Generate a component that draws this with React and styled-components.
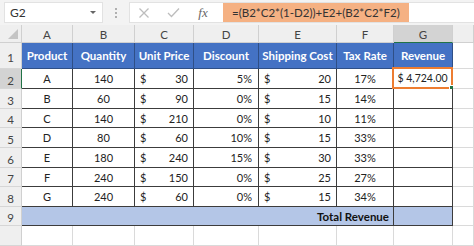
import React from "react";
import styled, { createGlobalStyle } from "styled-components";

const Global = createGlobalStyle`
  html, body { margin: 0; padding: 0; background: #ffffff; }
  body { font-family: Lato, "Liberation Sans", sans-serif; overflow: hidden; }
`;

const Page = styled.div`
  width: 474px;
  height: 246px;
  display: flex;
  flex-direction: column;
  overflow: hidden;
`;

const Toolbar = styled.div`
  height: 29px;
  background: #f3f3f3;
  display: flex;
  align-items: center;
  padding: 0 0 0 4px;
  box-sizing: border-box;
`;

const NameBox = styled.div`
  width: 99px;
  height: 21px;
  background: #fff;
  border: 1px solid #e2e2e2;
  box-sizing: border-box;
  display: flex;
  align-items: center;
  justify-content: space-between;
  padding: 0 6px 0 5px;
  font-size: 12px;
  color: #333;
`;

const Caret = styled.span`
  width: 0;
  height: 0;
  border-left: 3px solid transparent;
  border-right: 3px solid transparent;
  border-top: 3px solid #666;
`;

const Dots = styled.div`
  width: 26px;
  display: flex;
  flex-direction: column;
  align-items: center;
  gap: 2px;
  & > span { width: 2px; height: 2px; background: #9a9a9a; border-radius: 1px; }
`;

const FormulaBox = styled.div`
  flex: 1;
  height: 21px;
  background: #fff;
  border: 1px solid #e2e2e2;
  border-right: none;
  box-sizing: border-box;
  display: flex;
  align-items: center;
`;

const IconSlot = styled.div`
  width: ${p => p.$w}px;
  display: flex;
  align-items: center;
  justify-content: center;
  color: #b8b8b8;
`;

const Fx = styled.span`
  font-family: "Liberation Serif", serif;
  font-style: italic;
  font-size: 13px;
  color: #666;
`;

const Formula = styled.div`
  height: 19px;
  background: #f5b183;
  display: flex;
  align-items: center;
  padding: 0 9px 0 9px;
  font-family: Lato, "Liberation Sans", sans-serif;
  font-size: 11.5px;
  color: #333;
  margin-left: 5px;
  white-space: nowrap;
`;

const Grid = styled.div`
  display: grid;
  grid-template-columns: 22px 51px 62px 59px 65px 78px 57px 59px 1fr;
  grid-template-rows: 18px 26px 20px 20px 19px 20px 20px 19px 20px 19px 20px;
  flex: 1;
`;

const Cell = styled.div`
  box-sizing: border-box;
  position: relative;
  display: flex;
  align-items: center;
  justify-content: ${p => p.$align || "center"};
  padding: 0 ${p => p.$pad ?? 0}px;
  font-size: 11px;
  color: #222;
  white-space: nowrap;
  border-right: 1px solid ${p => (p.$dark ? "#3c3c3c" : "#dadada")};
  border-bottom: 1px solid ${p => (p.$dark ? "#3c3c3c" : "#dadada")};
  background: ${p => p.$bg || "#fff"};
  grid-column: ${p => p.$span ? `span ${p.$span}` : "auto"};
`;

const ColHead = styled(Cell)`
  background: ${p => (p.$sel ? "#d3d3d3" : "#efefef")};
  border-right: 1px solid #d0d0d0;
  border-bottom: 1px solid ${p => (p.$sel ? "#217346" : "#d0d0d0")};
  color: #444;
  font-size: 11.5px;
  padding-top: 1px;
`;

const RowHead = styled(Cell)`
  background: ${p => (p.$sel ? "#d3d3d3" : "#efefef")};
  border-right: 1px solid ${p => (p.$sel ? "#217346" : "#d0d0d0")};
  border-bottom: 1px solid #d6d6d6;
  color: #444;
  font-size: 11.5px;
  padding-top: 3px;
`;

const Corner = styled(ColHead)`
  &::after {
    content: "";
    position: absolute;
    right: 3px;
    bottom: 3px;
    width: 0;
    height: 0;
    border-left: 10px solid transparent;
    border-bottom: 10px solid #c4c4c4;
  }
`;

const Head = styled(Cell)`
  background: #4472c4;
  color: #fff;
  font-weight: 700;
  font-size: 11.5px;
  border-right: 1px solid #2f4f86;
  border-bottom: 1px solid #2f4f86;
`;

const Money = styled(Cell)`
  justify-content: space-between;
  padding: 0 5px 0 5px;
`;

const Selected = styled.div`
  position: absolute;
  left: -2px;
  top: -2px;
  right: -1px;
  bottom: -1px;
  border: 2px solid #ed7d31;
  box-sizing: border-box;
  display: flex;
  align-items: center;
  justify-content: center;
  background: #fff;
  font-size: 10.5px;
  color: #222;
  white-space: nowrap;
  &::after {
    content: "";
    position: absolute;
    right: -4px;
    bottom: -4px;
    width: 4px;
    height: 4px;
    background: #217346;
    border: 1px solid #fff;
  }
`;

const TotalCell = styled(Cell)`
  font-weight: 700;
  font-size: 11.5px;
  color: #111;
  background: #b4c6e7;
`;

const cols = ["A", "B", "C", "D", "E", "F", "G", ""];
const heads = ["Product", "Quantity", "Unit Price", "Discount", "Shipping Cost", "Tax Rate", "Revenue"];
const data = [
  ["A", 140, 30, "5%", 20, "17%"],
  ["B", 60, 90, "0%", 15, "14%"],
  ["C", 140, 210, "0%", 10, "11%"],
  ["D", 80, 60, "10%", 15, "33%"],
  ["E", 180, 240, "15%", 30, "33%"],
  ["F", 240, 150, "0%", 25, "27%"],
  ["G", 240, 60, "0%", 15, "34%"],
];

export default function App() {
  return (
    <Page>
      <Global />
      <Toolbar>
        <NameBox>
          <span>G2</span>
          <Caret />
        </NameBox>
        <Dots><span /><span /><span /></Dots>
        <FormulaBox>
          <IconSlot $w={28}>
            <svg width="12" height="12" viewBox="0 0 12 12">
              <path d="M1.5 1.5 L10.5 10.5 M10.5 1.5 L1.5 10.5" stroke="#bdbdbd" strokeWidth="1.3" fill="none" />
            </svg>
          </IconSlot>
          <IconSlot $w={30}>
            <svg width="13" height="11" viewBox="0 0 13 11">
              <path d="M1 6 L4.5 9.5 L12 1.5" stroke="#bdbdbd" strokeWidth="1.3" fill="none" />
            </svg>
          </IconSlot>
          <IconSlot $w={30}><Fx>fx</Fx></IconSlot>
          <Formula>=(B2*C2*(1-D2))+E2+(B2*C2*F2)</Formula>
        </FormulaBox>
      </Toolbar>
      <Grid>
        <Corner />
        {cols.map((c, i) => (
          <ColHead key={i} $sel={c === "G"}>{c}</ColHead>
        ))}

        <RowHead>1</RowHead>
        {heads.map(h => (
          <Head key={h}>{h}</Head>
        ))}
        <Cell />

        {data.map((r, i) => (
          <React.Fragment key={i}>
            <RowHead $sel={i === 0}>{i + 2}</RowHead>
            <Cell $dark>{r[0]}</Cell>
            <Cell $dark>{r[1]}</Cell>
            <Money $dark><span>$</span><span>{r[2]}</span></Money>
            <Cell $dark $align="flex-end" $pad={6}>{r[3]}</Cell>
            <Money $dark><span>$</span><span>{r[4]}</span></Money>
            <Cell $dark>{r[5]}</Cell>
            <Cell $dark>
              {i === 0 && <Selected>$ 4,724.00</Selected>}
            </Cell>
            <Cell />
          </React.Fragment>
        ))}

        <RowHead>9</RowHead>
        <TotalCell $dark $span={6} $align="flex-end" $pad={4}>Total Revenue</TotalCell>
        <TotalCell $dark />
        <Cell />

        <RowHead />
        <Cell /><Cell /><Cell /><Cell /><Cell /><Cell /><Cell /><Cell />
      </Grid>
    </Page>
  );
}
